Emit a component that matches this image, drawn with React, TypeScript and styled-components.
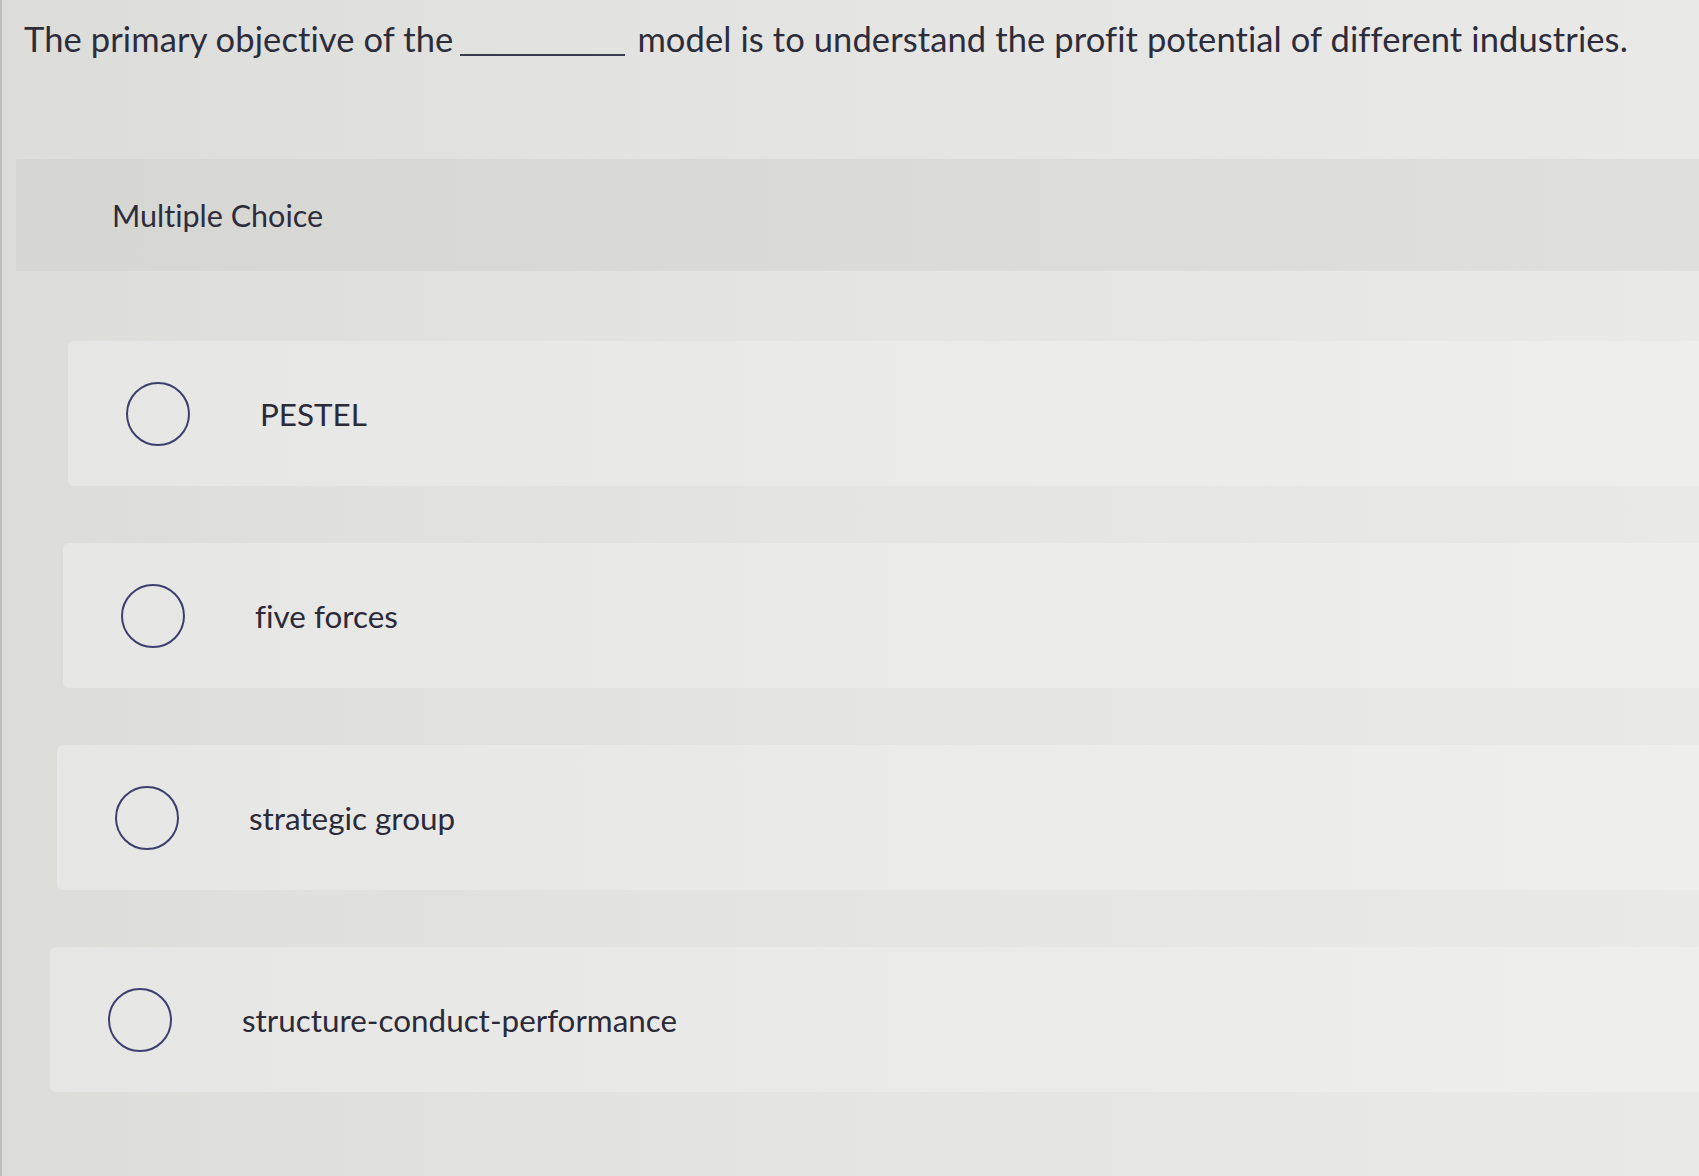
import React from "react";
import styled, { createGlobalStyle } from "styled-components";

const GlobalStyle = createGlobalStyle`
  html, body {
    margin: 0;
    padding: 0;
  }
  body {
    background: linear-gradient(90deg, #dcdcd9 0%, #e3e3e1 40%, #e9e9e7 100%);
    font-family: Lato, "Open Sans", Arial, sans-serif;
    font-variant-ligatures: none;
    color: #2c2b3a;
    min-height: 1176px;
    overflow: hidden;
  }
`;

const Page = styled.div`
  width: 1699px;
  height: 1176px;
  border-left: 2px solid #bdbdbb;
  box-sizing: border-box;
  display: flex;
  flex-direction: column;
`;

const Question = styled.p`
  margin: 0;
  padding: 17px 0 0 22px;
  font-size: 34.5px;
  line-height: 44px;
  letter-spacing: 0.1px;
  color: #2d2c3b;
  white-space: nowrap;
`;

const Blank = styled.span`
  display: inline-block;
  width: 165px;
  margin: 0 12px 0 7px;
  border-bottom: 2px solid #3a3a4e;
  vertical-align: -4px;
`;

const Header = styled.div`
  margin: 98px 0 0 14px;
  height: 112px;
  background: linear-gradient(90deg, #d6d6d3 0%, #dadad8 50%, #dfdfdd 100%);
  display: flex;
  align-items: center;
  padding-left: 96px;
  font-size: 30.5px;
  color: #2d2c3b;
`;

const OptionList = styled.div`
  display: flex;
  flex-direction: column;
  gap: 57px;
  padding: 70px 0 0 0;
`;

const Option = styled.label<{ $indent: number }>`
  height: 145px;
  margin-left: ${(p) => p.$indent}px;
  display: flex;
  align-items: center;
  padding-left: 58px;
  background: linear-gradient(90deg, #e6e6e4 0%, #eaeae8 50%, #eeeeec 100%);
  border-radius: 6px 0 0 6px;
  cursor: pointer;
`;

const Radio = styled.span`
  width: 60px;
  height: 60px;
  border-radius: 50%;
  border: 2.5px solid #3c3f6e;
  flex-shrink: 0;
`;

const Label = styled.span`
  margin-left: 70px;
  font-size: 31.4px;
  color: #2b2a39;
`;

const options = [
  { text: "PESTEL", indent: 66 },
  { text: "five forces", indent: 61 },
  { text: "strategic group", indent: 55 },
  { text: "structure-conduct-performance", indent: 48 },
];

export default function App() {
  return (
    <>
      <GlobalStyle />
      <Page>
        <Question>
          The primary objective of the<Blank />model is to understand the profit potential of different industries.
        </Question>
        <Header>Multiple Choice</Header>
        <OptionList>
          {options.map((o) => (
            <Option key={o.text} $indent={o.indent}>
              <Radio />
              <Label>{o.text}</Label>
            </Option>
          ))}
        </OptionList>
      </Page>
    </>
  );
}
